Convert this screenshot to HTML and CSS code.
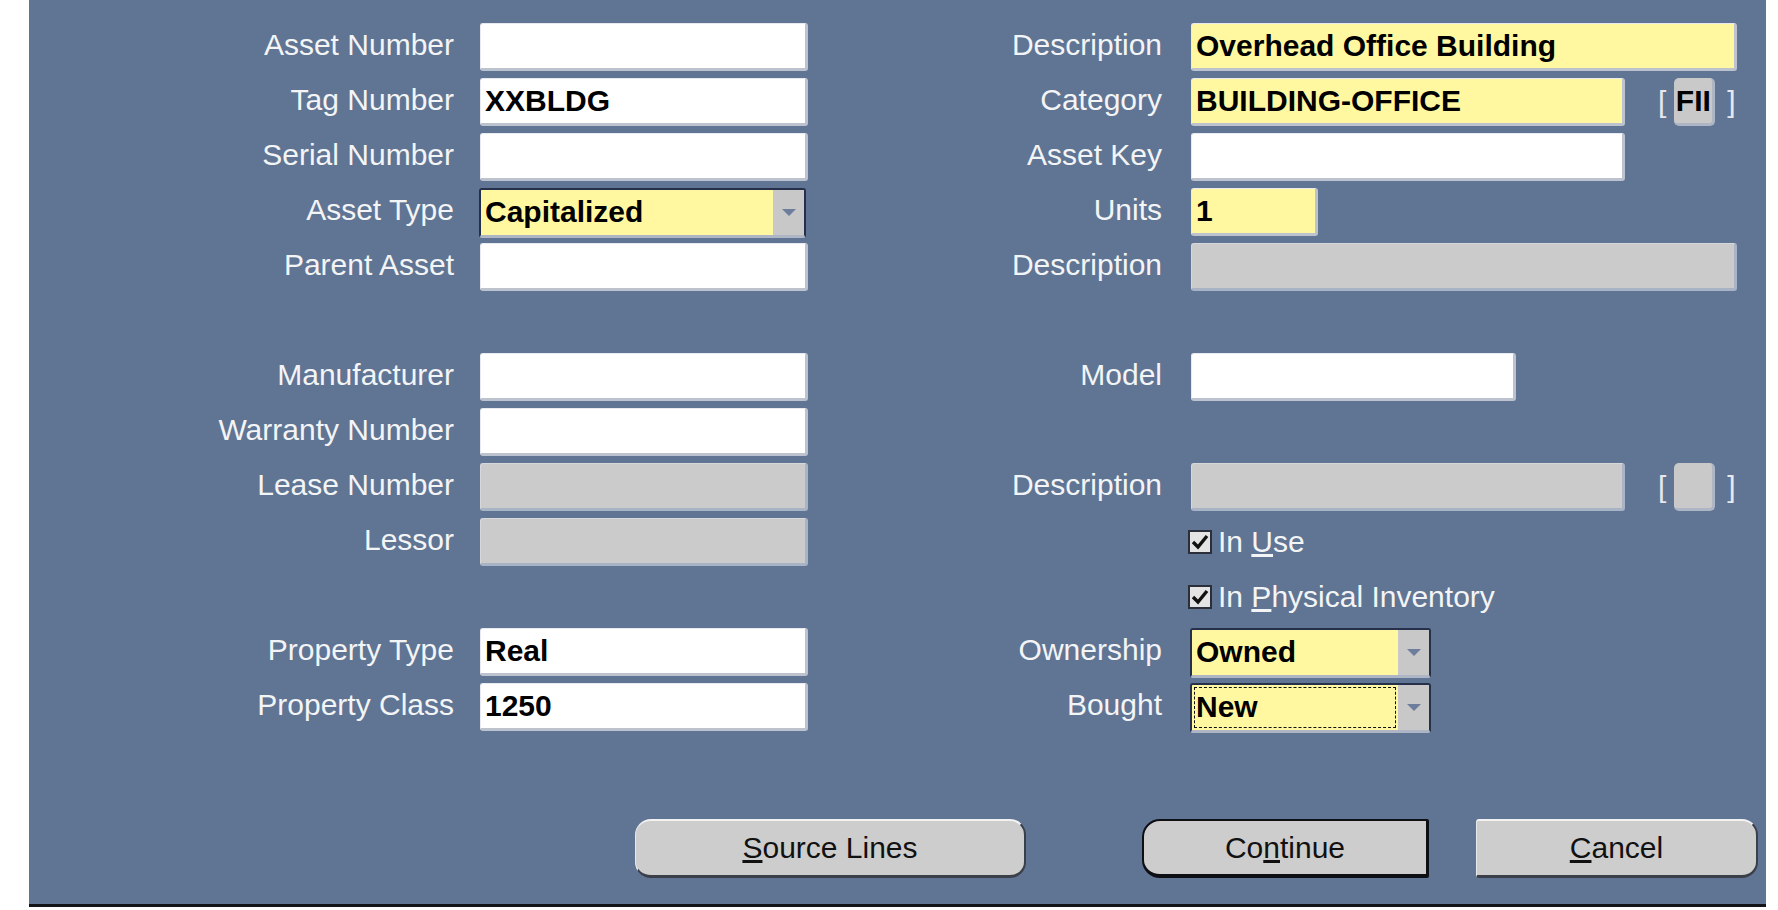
FILE: index.html
```html
<!DOCTYPE html>
<html>
<head>
<meta charset="utf-8">
<title>Asset Details</title>
<link rel="stylesheet" href="styles.css">
</head>
<body>
<div class="panel">
  <div class="form">
    <!-- row 1 -->
    <div class="lbl">Asset Number</div>
    <div class="cell"><div class="fld w-left"></div></div>
    <div class="lbl lbl-r">Description</div>
    <div class="cell"><div class="fld req w-full">Overhead Office Building</div></div>

    <!-- row 2 -->
    <div class="lbl">Tag Number</div>
    <div class="cell"><div class="fld w-left">XXBLDG</div></div>
    <div class="lbl lbl-r">Category</div>
    <div class="cell">
      <div class="fld req w-cat">BUILDING-OFFICE</div>
      <div class="brk"><span class="br">[</span><span class="bbtn">FII</span><span class="br">]</span></div>
    </div>

    <!-- row 3 -->
    <div class="lbl">Serial Number</div>
    <div class="cell"><div class="fld w-left"></div></div>
    <div class="lbl lbl-r">Asset Key</div>
    <div class="cell"><div class="fld w-cat"></div></div>

    <!-- row 4 -->
    <div class="lbl">Asset Type</div>
    <div class="cell">
      <div class="combo w-left">
        <div class="ctext">Capitalized</div>
        <div class="cbtn"><span class="arrow"></span></div>
      </div>
    </div>
    <div class="lbl lbl-r">Units</div>
    <div class="cell"><div class="fld req w-units">1</div></div>

    <!-- row 5 -->
    <div class="lbl">Parent Asset</div>
    <div class="cell"><div class="fld w-left"></div></div>
    <div class="lbl lbl-r">Description</div>
    <div class="cell"><div class="fld dis w-full"></div></div>

    <!-- row 6 (blank) -->
    <div class="blank"></div>

    <!-- row 7 -->
    <div class="lbl">Manufacturer</div>
    <div class="cell"><div class="fld w-left"></div></div>
    <div class="lbl lbl-r">Model</div>
    <div class="cell"><div class="fld w-model"></div></div>

    <!-- row 8 -->
    <div class="lbl">Warranty Number</div>
    <div class="cell"><div class="fld w-left"></div></div>
    <div class="lbl lbl-r"></div>
    <div class="cell"></div>

    <!-- row 9 -->
    <div class="lbl">Lease Number</div>
    <div class="cell"><div class="fld dis w-left"></div></div>
    <div class="lbl lbl-r">Description</div>
    <div class="cell">
      <div class="fld dis w-cat"></div>
      <div class="brk"><span class="br">[</span><span class="bbtn"></span><span class="br">]</span></div>
    </div>

    <!-- row 10 -->
    <div class="lbl">Lessor</div>
    <div class="cell"><div class="fld dis w-left"></div></div>
    <div class="lbl lbl-r"></div>
    <div class="cell">
      <div class="chk">
        <svg class="cbox" width="24" height="24" viewBox="0 0 24 24"><rect x="1" y="1" width="22" height="22" fill="#e4e4e4" stroke="#2a2f3a" stroke-width="2"/><path d="M5 12 L10 17 L19 6" fill="none" stroke="#111" stroke-width="3.4"/></svg>
        <span>In <u>U</u>se</span>
      </div>
    </div>

    <!-- row 11 -->
    <div class="lbl"></div>
    <div class="cell"></div>
    <div class="lbl lbl-r"></div>
    <div class="cell">
      <div class="chk">
        <svg class="cbox" width="24" height="24" viewBox="0 0 24 24"><rect x="1" y="1" width="22" height="22" fill="#e4e4e4" stroke="#2a2f3a" stroke-width="2"/><path d="M5 12 L10 17 L19 6" fill="none" stroke="#111" stroke-width="3.4"/></svg>
        <span>In <u>P</u>hysical Inventory</span>
      </div>
    </div>

    <!-- row 12 -->
    <div class="lbl">Property Type</div>
    <div class="cell"><div class="fld w-left">Real</div></div>
    <div class="lbl lbl-r">Ownership</div>
    <div class="cell">
      <div class="combo w-own">
        <div class="ctext">Owned</div>
        <div class="cbtn"><span class="arrow"></span></div>
      </div>
    </div>

    <!-- row 13 -->
    <div class="lbl">Property Class</div>
    <div class="cell"><div class="fld w-left">1250</div></div>
    <div class="lbl lbl-r">Bought</div>
    <div class="cell">
      <div class="combo w-own">
        <div class="ctext focus">New</div>
        <div class="cbtn"><span class="arrow"></span></div>
      </div>
    </div>
  </div>

  <div class="buttons">
    <div class="btn b-source"><u>S</u>ource Lines</div>
    <div class="btn b-continue">Co<u>n</u>tinue</div>
    <div class="btn b-cancel"><u>C</u>ancel</div>
  </div>
</div>
</body>
</html>
```

FILE: styles.css
```css
html, body {
  margin: 0;
  padding: 0;
  background: #ffffff;
}

body {
  font-family: "Liberation Sans", Arial, sans-serif;
  width: 1778px;
  height: 910px;
  overflow: hidden;
}

.panel {
  margin-left: 29px;
  width: 1737px;
  height: 904px;
  background: #607493;
  border-bottom: 3px solid #121418;
  box-sizing: content-box;
}

.form {
  display: grid;
  grid-template-columns: 451px 328px 383px 1fr;
  grid-auto-rows: 48px;
  row-gap: 7px;
  padding-top: 23px;
}

.blank {
  grid-column: 1 / -1;
}

.lbl {
  text-align: right;
  padding-right: 26px;
  color: #f3f4f6;
  font-size: 30px;
  line-height: 44px;
  white-space: nowrap;
}

.lbl-r {
  padding-right: 29px;
}

.cell {
  display: flex;
  align-items: center;
}

.fld {
  box-sizing: border-box;
  height: 48px;
  background: #ffffff;
  border-radius: 3px;
  border-top: 1px solid #e8eaef;
  border-left: 1px solid #e8eaef;
  border-right: 3px solid #bcc2ce;
  border-bottom: 3px solid #bcc2ce;
  padding-left: 4px;
  font-size: 30px;
  font-weight: bold;
  line-height: 44px;
  color: #000;
  white-space: nowrap;
  overflow: hidden;
}

.req {
  background: #fff8a0;
}

.dis {
  background: #cbcbcb;
  border-top-color: #d6d8dc;
  border-left-color: #d6d8dc;
  border-right-color: #a9b3c6;
  border-bottom-color: #a9b3c6;
}

.w-left { width: 328px; }
.w-full { width: 546px; }
.w-cat { width: 434px; }
.w-units { width: 127px; }
.w-model { width: 325px; }
.w-own { width: 241px; margin-left: -3px; }

.brk {
  display: flex;
  align-items: center;
  margin-left: 33px;
  height: 48px;
}

.br {
  color: #e6e8ee;
  font-size: 30px;
  line-height: 48px;
}

.bbtn {
  box-sizing: border-box;
  width: 41px;
  height: 48px;
  margin: 0 12px 0 8px;
  background: #c9c9c9;
  border-radius: 5px;
  border-right: 3px solid #aeb6c6;
  border-bottom: 3px solid #aeb6c6;
  font-size: 30px;
  font-weight: bold;
  line-height: 45px;
  text-align: center;
  color: #000;
  overflow: hidden;
}

.combo {
  box-sizing: border-box;
  display: flex;
  height: 50px;
  margin-top: 1px;
  border: 2px solid #26304a;
  border-bottom: 3px solid #aeb5c4;
  border-radius: 3px;
  background: #fff8a0;
  margin-left: -1px;
}

.combo.w-left {
  width: 327px;
}

.ctext {
  flex: 1;
  padding-left: 4px;
  font-size: 30px;
  font-weight: bold;
  line-height: 44px;
  color: #000;
  white-space: nowrap;
}

.ctext.focus {
  outline: 1px dashed #111;
  outline-offset: -3px;
}

.cbtn {
  width: 31px;
  background: #c8c8c8;
  display: flex;
  align-items: center;
  justify-content: center;
}

.arrow {
  width: 0;
  height: 0;
  border-left: 7px solid transparent;
  border-right: 7px solid transparent;
  border-top: 7px solid #6d7d9c;
}

.chk {
  display: flex;
  align-items: center;
  margin-left: -3px;
  color: #f3f4f6;
  font-size: 30px;
  white-space: nowrap;
}

.cbox {
  margin-right: 6px;
  flex: none;
}

.buttons {
  display: flex;
  margin-top: 88px;
  padding-left: 606px;
}

.btn {
  box-sizing: border-box;
  height: 59px;
  background: #cdcdcd;
  font-size: 30px;
  color: #111;
  text-align: center;
  line-height: 54px;
  border-top: 2px solid #f2f2f2;
  border-left: 1px solid #e8e8e8;
  border-right: 2px solid #3a3f4a;
  border-bottom: 3px solid #3a3f4a;
}

.b-source {
  width: 391px;
  border-radius: 16px;
}

.b-continue {
  width: 287px;
  margin-left: 116px;
  border: 2px solid #0d0f14;
  border-bottom-width: 4px;
  border-right-width: 3px;
  border-radius: 18px 2px 2px 18px;
}

.b-cancel {
  width: 282px;
  margin-left: 47px;
  border-radius: 3px 16px 16px 3px;
}
```
